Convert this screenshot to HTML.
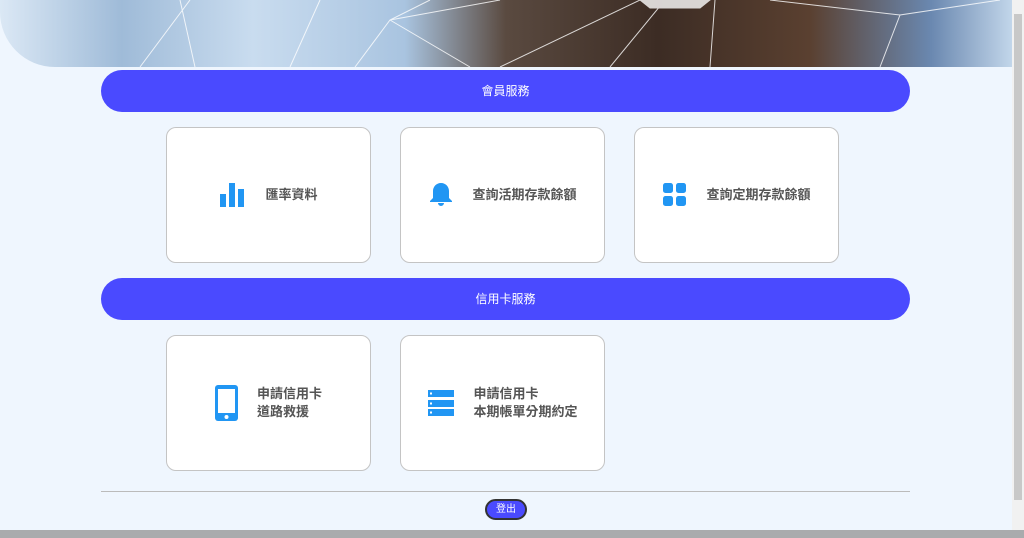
<!DOCTYPE html>
<html><head><meta charset="utf-8"><style>
*{margin:0;padding:0;box-sizing:border-box}
body{width:1024px;height:538px;overflow:hidden;background:#eff6fe;font-family:"Liberation Sans","Noto Sans CJK TC",sans-serif;position:relative}
.hero{position:absolute;left:0;top:0;width:1012px;height:67px;border-bottom-left-radius:55px;overflow:hidden;
background:linear-gradient(90deg,#dbe8f5 0%,#9fbbd8 12%,#c9dcef 25%,#a9c4e0 40%,#5a4a40 50%,#3c2c24 65%,#5a4030 80%,#6a88b0 92%,#c2d6ea 100%)}
.sb{position:absolute;right:0;top:0;width:12px;height:530px;background:#f1f1f1}
.sb i{position:absolute;left:2px;top:14px;width:8px;height:486px;background:#c8c8c8}
.bot{position:absolute;left:0;top:530px;width:1024px;height:8px;background:#a9abad}
.ban{position:absolute;left:101px;width:809px;height:42px;background:#4a4aff;border-radius:21px;color:#fff;font-size:12px;text-align:center;line-height:42px}
.card{position:absolute;width:205px;height:136px;background:#fff;border:1px solid #c4c4c4;border-radius:10px;display:flex;align-items:center;justify-content:center;gap:18px;color:#555;font-size:13px;font-weight:bold;line-height:18px}
.hr{position:absolute;left:101px;top:491px;width:809px;height:1px;background:#bbb}
.btn{position:absolute;left:485px;top:499px;width:42px;height:21px;border-radius:11px;background:#4a4aff;border:2px solid #333;color:#fff;font-size:10px;text-align:center;line-height:17px}
</style></head><body>
<div class="hero">
<svg width="1012" height="67" style="position:absolute;left:0;top:0" stroke="#fff" stroke-width="1" opacity=".8" fill="none">
<path d="M140 67L190 0M195 67L180 0M290 67L320 0M355 67L390 20L430 0M390 20L500 0M390 20L470 67M500 67L640 0M610 67L665 0M710 67L715 0M880 67L900 15L1000 0M900 15L770 0"/>
<path d="M640 0H710L700 8H650Z" fill="#fff"/>
</svg></div>
<div class="sb"><i></i></div>
<div class="bot"></div>
<div class="ban" style="top:70px">會員服務</div>
<div class="card" style="left:166px;top:127px"><svg width="28" height="26"><rect x="1" y="12" width="6" height="13" fill="#2196f3"/><rect x="10" y="1" width="6" height="24" fill="#2196f3"/><rect x="19" y="7" width="6" height="18" fill="#2196f3"/></svg>匯率資料</div>
<div class="card" style="left:400px;top:127px"><svg width="26" height="26"><path d="M13 1c-5 0-8 4-8 8v7l-3 3v1h22v-1l-3-3v-7c0-4-3-8-8-8z M10 21h6a3 3 0 0 1-6 0z" fill="#2196f3"/></svg>查詢活期存款餘額</div>
<div class="card" style="left:634px;top:127px"><svg width="26" height="26"><rect x="1" y="1" width="10" height="10" rx="2.5" fill="#2196f3"/><rect x="14" y="1" width="10" height="10" rx="2.5" fill="#2196f3"/><rect x="1" y="14" width="10" height="10" rx="2.5" fill="#2196f3"/><rect x="14" y="14" width="10" height="10" rx="2.5" fill="#2196f3"/></svg>查詢定期存款餘額</div>
<div class="ban" style="top:278px">信用卡服務</div>
<div class="card" style="left:166px;top:335px"><svg width="24" height="38"><rect x="0" y="1" width="23" height="36" rx="3" fill="#2196f3"/><rect x="3" y="5" width="17" height="24" fill="#fff"/><circle cx="11.5" cy="33" r="2" fill="#fff"/></svg><div>申請信用卡<br>道路救援</div></div>
<div class="card" style="left:400px;top:335px"><svg width="28" height="28"><rect x="1" y="1" width="26" height="7" fill="#2196f3"/><rect x="1" y="11" width="26" height="7" fill="#2196f3"/><rect x="1" y="20" width="26" height="7" fill="#2196f3"/><rect x="3" y="3.5" width="2" height="2" fill="#fff"/><rect x="3" y="13.5" width="2" height="2" fill="#fff"/><rect x="3" y="22.5" width="2" height="2" fill="#fff"/></svg><div>申請信用卡<br>本期帳單分期約定</div></div>
<div class="hr"></div>
<div class="btn">登出</div>
</body></html>
